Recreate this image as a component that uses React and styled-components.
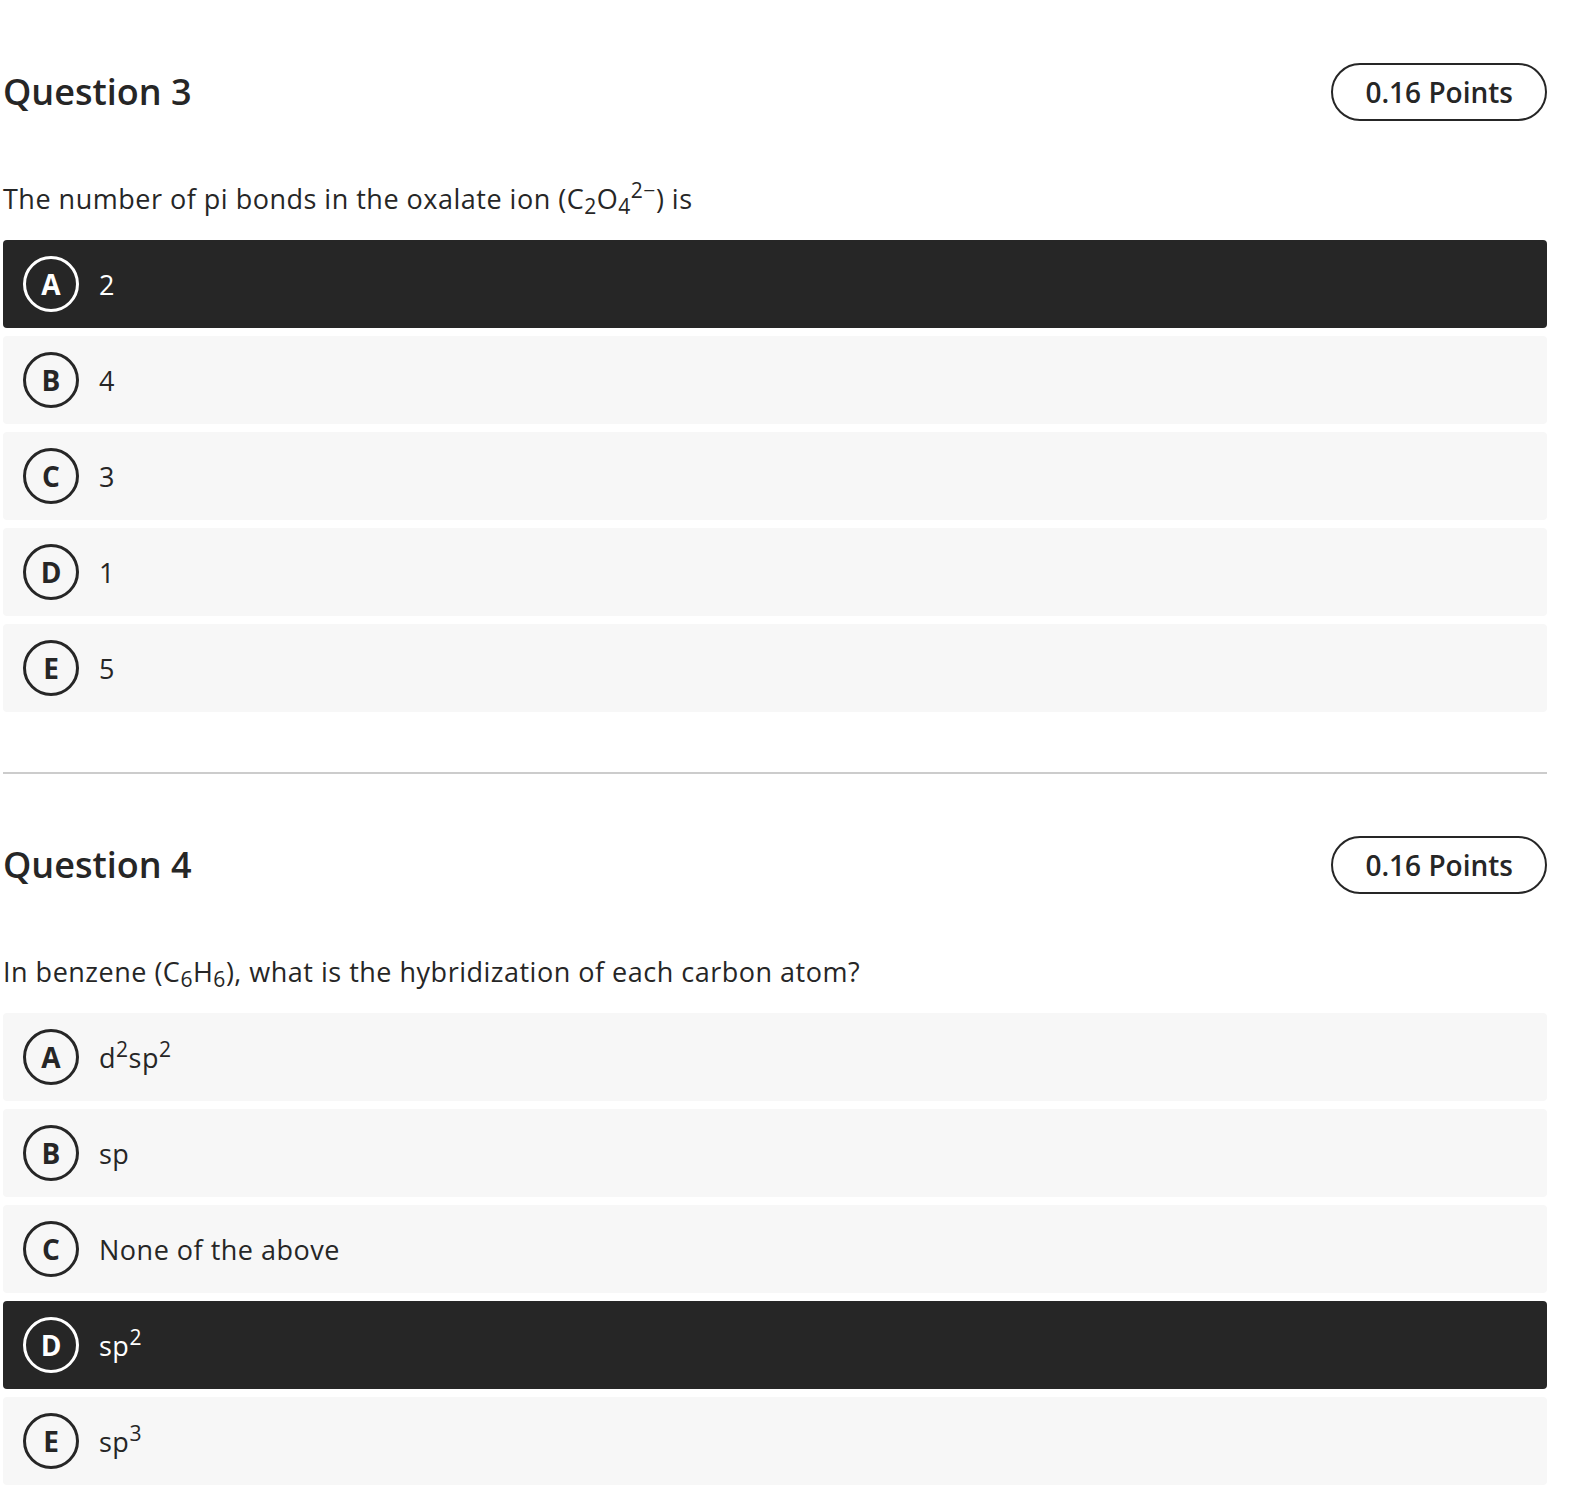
import styled, { createGlobalStyle } from "styled-components";

const GlobalStyle = createGlobalStyle`
  html, body {
    margin: 0;
    padding: 0;
    background: #fff;
  }
  body {
    font-family: "Open Sans", "Noto Sans", Arial, sans-serif;
    color: #262626;
  }
`;

const Page = styled.main`
  width: 1544px;
  margin-left: 3px;
  padding: 63px 0 20px;
`;

const Header = styled.div`
  display: flex;
  justify-content: space-between;
  align-items: center;
`;

const Title = styled.h2`
  margin: 0;
  font-size: 36px;
  font-weight: 600;
  line-height: 1.2;
`;

const Points = styled.div`
  height: 58px;
  box-sizing: border-box;
  display: flex;
  align-items: center;
  padding: 0 32px;
  border: 2px solid #262626;
  border-radius: 29px;
  font-size: 28px;
  font-weight: 600;
`;

const Prompt = styled.p`
  margin: 58px 0 22px;
  font-size: 27px;
  line-height: 39px;
  letter-spacing: 0.5px;
`;

const Options = styled.ul`
  list-style: none;
  margin: 0;
  padding: 0;
  display: flex;
  flex-direction: column;
  gap: 8px;
`;

const Option = styled.li`
  height: 88px;
  box-sizing: border-box;
  display: flex;
  align-items: center;
  gap: 20px;
  padding: 0 20px;
  border-radius: 4px;
  background: ${(p) => (p.$selected ? "#262626" : "#f7f7f7")};
  color: ${(p) => (p.$selected ? "#ffffff" : "#262626")};
  font-size: 27px;
  letter-spacing: 0.5px;
`;

const Badge = styled.span`
  width: 56px;
  height: 56px;
  box-sizing: border-box;
  flex: none;
  display: flex;
  align-items: center;
  justify-content: center;
  border: 3px solid currentColor;
  border-radius: 50%;
  font-size: 28px;
  font-weight: 700;
  letter-spacing: 0;
`;

const Sub = styled.sub`
  font-size: 0.78em;
  line-height: 0;
  vertical-align: -0.25em;
`;

const Sup = styled.sup`
  font-size: 0.78em;
  line-height: 0;
  vertical-align: 0.5em;
`;

const Divider = styled.hr`
  border: none;
  height: 2px;
  background: #cccccc;
  margin: 60px 0 62px;
`;

const questions = [
  {
    title: "Question 3",
    prompt: (
      <>
        The number of pi bonds in the oxalate ion (C<Sub>2</Sub>O<Sub>4</Sub>
        <Sup>2−</Sup>) is
      </>
    ),
    selected: "A",
    options: [
      ["A", "2"],
      ["B", "4"],
      ["C", "3"],
      ["D", "1"],
      ["E", "5"],
    ],
  },
  {
    title: "Question 4",
    prompt: (
      <>
        In benzene (C<Sub>6</Sub>H<Sub>6</Sub>), what is the hybridization of
        each carbon atom?
      </>
    ),
    selected: "D",
    options: [
      [
        "A",
        <>
          d<Sup>2</Sup>sp<Sup>2</Sup>
        </>,
      ],
      ["B", "sp"],
      ["C", "None of the above"],
      [
        "D",
        <>
          sp<Sup>2</Sup>
        </>,
      ],
      [
        "E",
        <>
          sp<Sup>3</Sup>
        </>,
      ],
    ],
  },
];

function Question({ q }) {
  return (
    <section>
      <Header>
        <Title>{q.title}</Title>
        <Points>0.16 Points</Points>
      </Header>
      <Prompt>{q.prompt}</Prompt>
      <Options>
        {q.options.map(([letter, text]) => (
          <Option key={letter} $selected={letter === q.selected}>
            <Badge>{letter}</Badge>
            <span>{text}</span>
          </Option>
        ))}
      </Options>
    </section>
  );
}

export default function App() {
  return (
    <>
      <GlobalStyle />
      <Page>
        {questions.map((q, i) => (
          <div key={q.title}>
            {i > 0 && <Divider />}
            <Question q={q} />
          </div>
        ))}
      </Page>
    </>
  );
}
